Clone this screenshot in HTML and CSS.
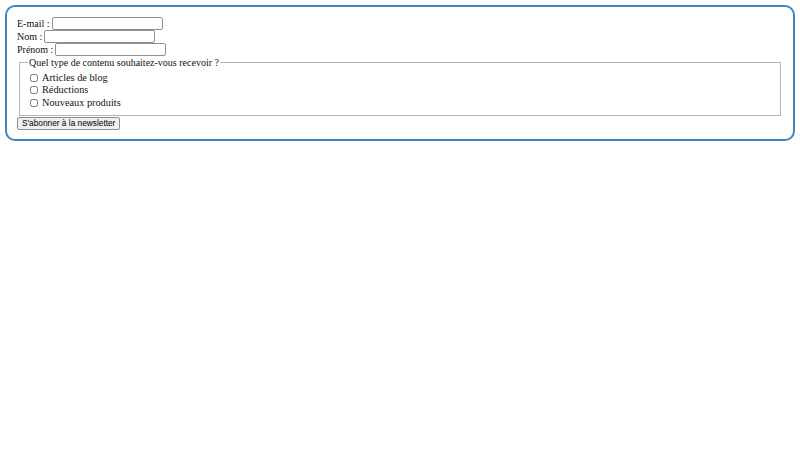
FILE: index.html
```html
<!DOCTYPE html>
<html lang="fr">
<head>
<meta charset="utf-8">
<title>Newsletter</title>
<link rel="stylesheet" href="styles.css">
</head>
<body>
<form class="newsletter">
  <div class="row"><label for="email">E-mail :</label> <input class="field" type="email" id="email"></div>
  <div class="row"><label for="nom">Nom :</label> <input class="field" type="text" id="nom"></div>
  <div class="row"><label for="prenom">Prénom :</label> <input class="field" type="text" id="prenom"></div>
  <fieldset class="topics">
    <legend class="topics-title">Quel type de contenu souhaitez-vous recevoir ?</legend>
    <div class="check"><input class="box" type="checkbox" id="blog"> <label for="blog">Articles de blog</label></div>
    <div class="check"><input class="box" type="checkbox" id="reduc"> <label for="reduc">Réductions</label></div>
    <div class="check"><input class="box" type="checkbox" id="prod"> <label for="prod">Nouveaux produits</label></div>
  </fieldset>
  <button class="submit" type="submit">S'abonner à la newsletter</button>
</form>
</body>
</html>
```
FILE: styles.css
```css
html, body {
  background: #ffffff;
}
body {
  margin: 5px;
  font-family: "Liberation Serif", "Times New Roman", serif;
  font-size: 10px;
  color: #111;
}
.newsletter {
  border: 2px solid #3a87c6;
  border-radius: 10px;
  padding: 10px 10px 9px;
  margin: 0;
}
.row {
  height: 13px;
  line-height: 13px;
  display: flex;
  align-items: center;
  gap: 2px;
}
.field {
  box-sizing: border-box;
  width: 111px;
  height: 13px;
  margin: 0;
  padding: 0 2px;
  border: 1px solid #8f8f8f;
  border-radius: 2px;
  font-size: 9px;
}
.topics {
  margin: 0 2px;
  padding: 0 8px 6px 9px;
  border: 1px solid #b5b5b5;
  min-height: 0;
}
.topics-title {
  padding: 0 1px;
  margin-left: -1px;
  line-height: 13px;
}
.check {
  display: flex;
  align-items: center;
  height: 12.3px;
  line-height: 12px;
  gap: 4px;
  font-size: 10.3px;
}
.check:first-of-type {
  margin-top: 3px;
}
.box {
  margin: 0 0 0 1px;
  width: 8px;
  height: 8px;
}
.submit {
  display: block;
  margin-top: 1px;
  height: 13px;
  padding: 0 4px;
  font-family: "Liberation Sans", Arial, sans-serif;
  font-size: 8.3px;
  line-height: 11px;
  background: #efefef;
  border: 1px solid #8f8f8f;
  border-radius: 2px;
  color: #000;
}
```
